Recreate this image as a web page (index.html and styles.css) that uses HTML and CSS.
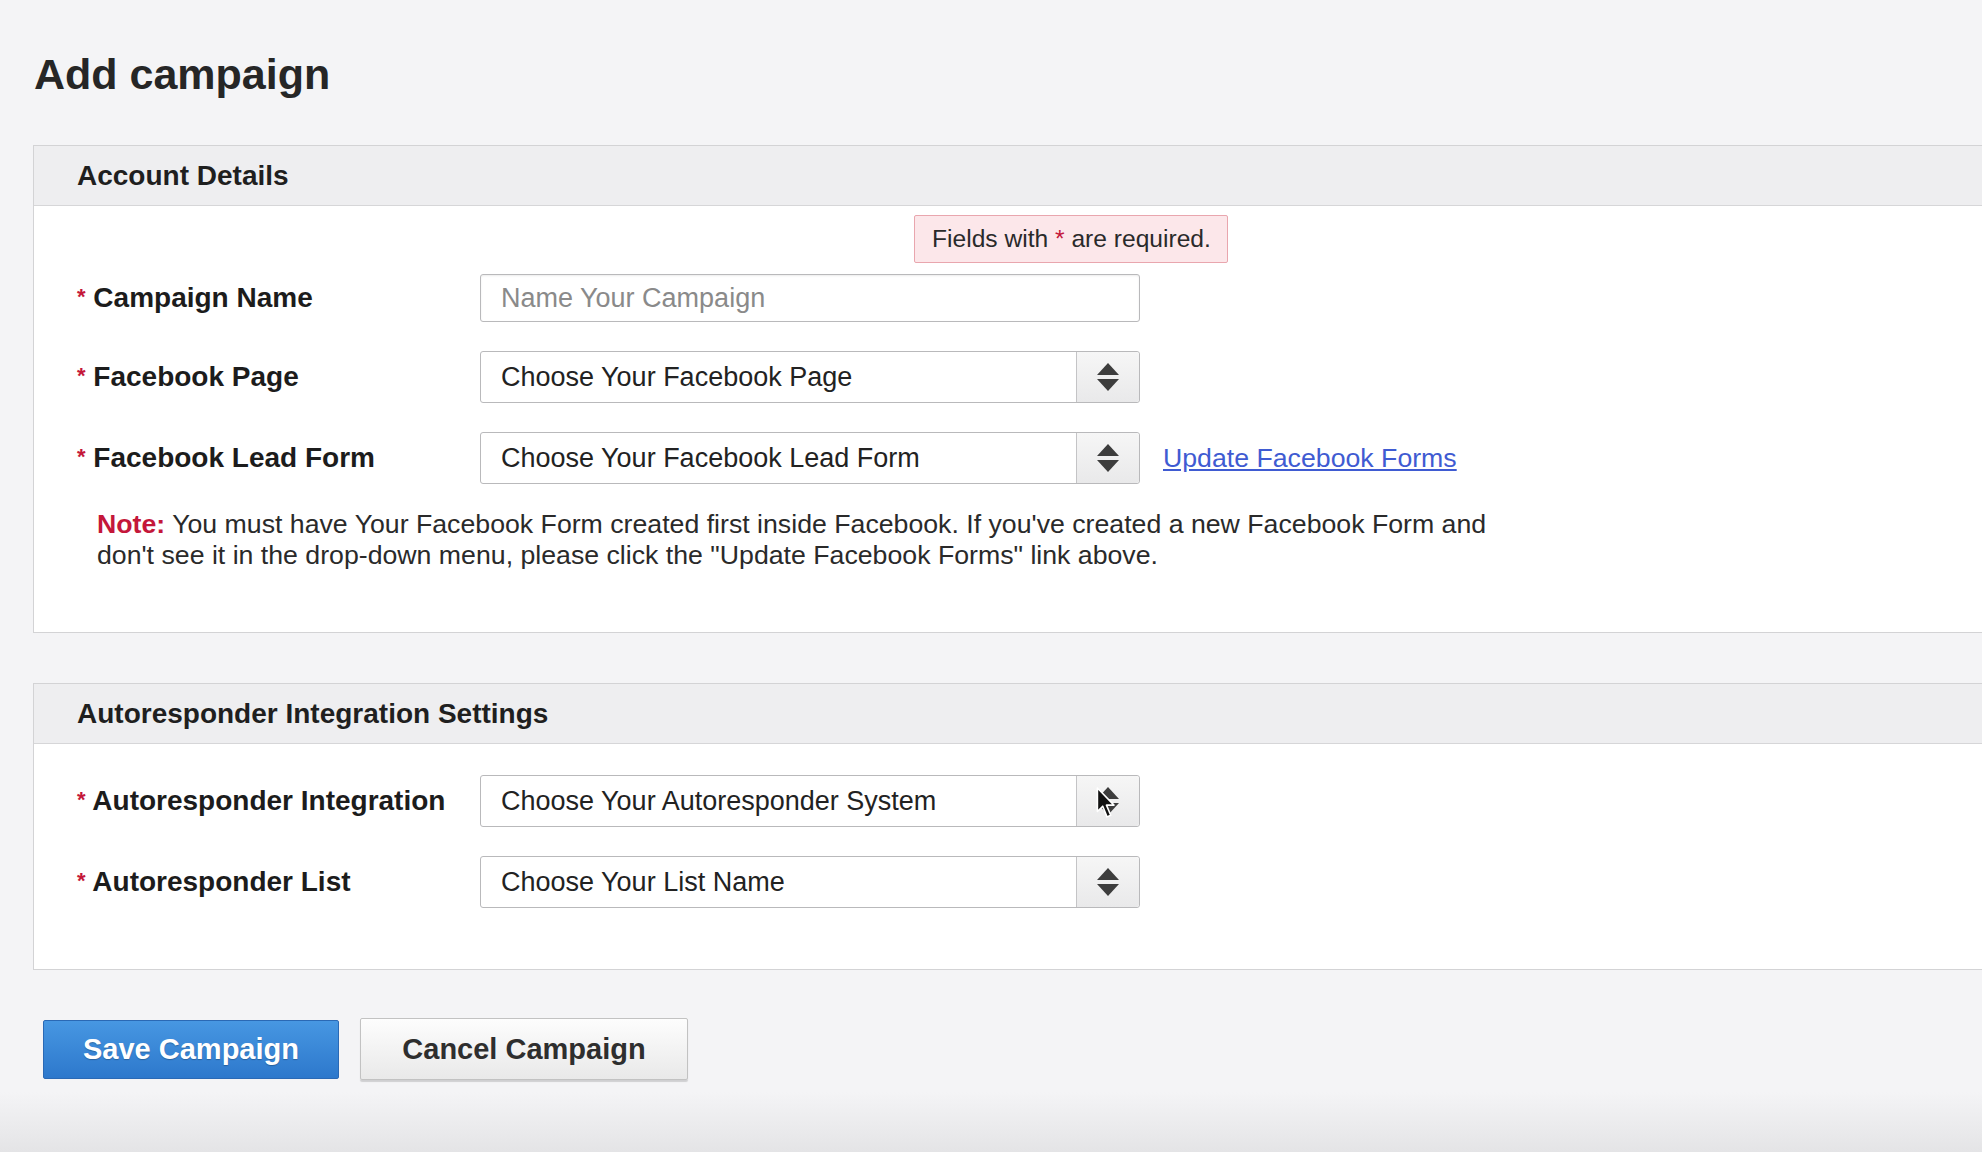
FILE: index.html
```html
<!DOCTYPE html>
<html lang="en">
<head>
  <meta charset="UTF-8" />
  <title>Add campaign</title>
  <link rel="stylesheet" href="styles.css">
</head>
<body>

  <div class="page">
    <h1>Add campaign</h1>

    <!-- Account details -->
    <div class="panel">
      <div class="panel-head">Account Details</div>
      <div class="panel-body first">
        <div class="notice-row">
          <div class="notice">Fields with <span class="req">*</span> are required.</div>
        </div>

        <div class="form-row">
          <label><span class="req">*</span> Campaign Name</label>
          <input type="text" class="text-input" placeholder="Name Your Campaign">
        </div>

        <div class="form-row">
          <label><span class="req">*</span> Facebook Page</label>
          <div class="select">
            <select><option>Choose Your Facebook Page</option></select>
            <span class="arrows">
              <svg width="24" height="30" viewBox="0 0 24 30"><path d="M12 1 L23 13 L1 13 Z" fill="#3d3d3d"/><path d="M1 17 L23 17 L12 29 Z" fill="#3d3d3d"/></svg>
            </span>
          </div>
        </div>

        <div class="form-row">
          <label><span class="req">*</span> Facebook Lead Form</label>
          <div class="select">
            <select><option>Choose Your Facebook Lead Form</option></select>
            <span class="arrows">
              <svg width="24" height="30" viewBox="0 0 24 30"><path d="M12 1 L23 13 L1 13 Z" fill="#3d3d3d"/><path d="M1 17 L23 17 L12 29 Z" fill="#3d3d3d"/></svg>
            </span>
          </div>
          <a href="#" class="update-link">Update Facebook Forms</a>
        </div>

        <p class="note"><span class="note-label">Note:</span> You must have Your Facebook Form created first inside Facebook. If you've created a new Facebook Form and<br>don't see it in the drop-down menu, please click the "Update Facebook Forms" link above.</p>
      </div>
    </div>

    <!-- Autoresponder -->
    <div class="panel second">
      <div class="panel-head">Autoresponder Integration Settings</div>
      <div class="panel-body">
        <div class="form-row">
          <label><span class="req">*</span> Autoresponder Integration</label>
          <div class="select">
            <select><option>Choose Your Autoresponder System</option></select>
            <span class="arrows">
              <svg width="24" height="30" viewBox="0 0 24 30"><path d="M12 1 L23 13 L1 13 Z" fill="#3d3d3d"/><path d="M1 17 L23 17 L12 29 Z" fill="#3d3d3d"/></svg>
            </span>
            <!-- mouse pointer -->
            <svg class="cursor" width="22" height="32" viewBox="0 0 20 30"><path d="M1 1 L1 23 L6 18 L10 28 L13.5 26.5 L9.5 17 L16.5 17 Z" fill="#111" stroke="#fff" stroke-width="1.5" stroke-linejoin="round"/></svg>
          </div>
        </div>

        <div class="form-row">
          <label><span class="req">*</span> Autoresponder List</label>
          <div class="select">
            <select><option>Choose Your List Name</option></select>
            <span class="arrows">
              <svg width="24" height="30" viewBox="0 0 24 30"><path d="M12 1 L23 13 L1 13 Z" fill="#3d3d3d"/><path d="M1 17 L23 17 L12 29 Z" fill="#3d3d3d"/></svg>
            </span>
          </div>
        </div>
      </div>
    </div>

    <div class="actions">
      <button class="btn btn-save">Save Campaign</button>
      <button class="btn btn-cancel">Cancel Campaign</button>
    </div>
  </div>

</body>
</html>
```

FILE: styles.css
```css
html, body {
  margin: 0;
  height: 100%;
}

body {
  font-family: "Liberation Sans", Arial, sans-serif;
  color: #222;
  background: linear-gradient(to bottom, #f4f4f6 0, #f4f4f6 calc(100% - 60px), #e4e4e6 100%);
  overflow: hidden;
}

.page {
  padding: 47px 0 0 33px;
}

h1 {
  margin: 0 0 0 1px;
  font-size: 43px;
  line-height: 54px;
  font-weight: bold;
  color: #262626;
}

.panel {
  margin-top: 44px;
  margin-right: -30px;
  background: #fff;
  border: 1px solid #d3d3d5;
}

.panel.second {
  margin-top: 50px;
}

.panel-head {
  height: 59px;
  line-height: 59px;
  padding-left: 43px;
  background: #eeeef0;
  border-bottom: 1px solid #d6d6d8;
  font-size: 28px;
  font-weight: bold;
  color: #1f1f1f;
}

.panel-body {
  padding: 31px 0 61px 0;
}

.panel-body.first {
  padding-top: 9px;
}

.notice-row {
  padding-left: 880px;
  margin-bottom: 11px;
}

.notice {
  display: inline-block;
  height: 46px;
  line-height: 46px;
  padding: 0 16px 0 17px;
  background: #fce7ea;
  border: 1px solid #e9a6ae;
  border-radius: 2px;
  font-size: 24.6px;
  color: #2a2a2a;
}

.req {
  color: #c4173a;
}

.form-row {
  display: grid;
  grid-template-columns: 403px 660px auto;
  align-items: center;
  padding-left: 43px;
  margin-bottom: 29px;
}

.form-row:last-of-type {
  margin-bottom: 0;
}

.form-row label {
  font-size: 28px;
  font-weight: bold;
  color: #1c1c1c;
}

.form-row label .req {
  font-size: 22px;
  vertical-align: 3px;
}

.text-input {
  box-sizing: border-box;
  width: 660px;
  height: 48px;
  padding: 0 20px;
  border: 1px solid #b9b9bb;
  border-radius: 3px;
  box-shadow: inset 0 1px 2px rgba(0,0,0,0.08);
  font-family: inherit;
  font-size: 27px;
  color: #333;
  outline: none;
}

.text-input::placeholder {
  color: #8a8a8a;
}

.select {
  position: relative;
  display: flex;
  box-sizing: border-box;
  width: 660px;
  height: 52px;
  border: 1px solid #b9b9bb;
  border-radius: 3px;
  background: #fff;
}

.select select {
  flex: 1;
  appearance: none;
  -webkit-appearance: none;
  border: none;
  background: transparent;
  padding: 0 0 0 20px;
  font-family: inherit;
  font-size: 27px;
  color: #222;
  outline: none;
}

.select .arrows {
  width: 62px;
  display: flex;
  align-items: center;
  justify-content: center;
  border-left: 1px solid #c4c4c6;
  background: linear-gradient(to bottom, #f6f6f6, #e9e9ea);
  border-radius: 0 3px 3px 0;
}

.select .cursor {
  position: absolute;
  left: 615px;
  top: 11px;
}

.update-link {
  margin-left: 23px;
  font-size: 26.7px;
  color: #3f5bd2;
  text-decoration: underline;
}

.note {
  margin: 25px 0 0 63px;
  font-size: 26.7px;
  line-height: 31px;
  color: #2a2a2a;
}

.note-label {
  color: #c4173a;
  font-weight: bold;
}

.actions {
  display: flex;
  align-items: center;
  gap: 21px;
  margin-top: 48px;
  padding-left: 10px;
}

.btn {
  font-family: inherit;
  font-size: 29px;
  font-weight: bold;
  border-radius: 2px;
  cursor: pointer;
}

.btn-save {
  width: 296px;
  height: 59px;
  color: #fff;
  background: linear-gradient(to bottom, #4797e2, #2d78cc);
  border: 1px solid #2a69b5;
  text-shadow: 0 1px 1px rgba(0,0,0,0.25);
}

.btn-cancel {
  width: 328px;
  height: 62px;
  color: #2e2e2e;
  background: linear-gradient(to bottom, #fdfdfd, #e9e9e9);
  border: 1px solid #c2c2c2;
  box-shadow: 0 2px 1px rgba(0,0,0,0.15);
}
```
